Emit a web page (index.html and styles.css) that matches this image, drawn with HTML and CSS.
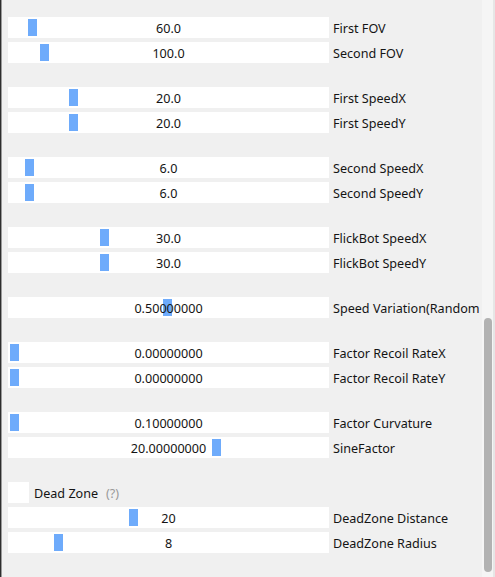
FILE: index.html
```html
<!DOCTYPE html>
<html>
<head>
<meta charset="utf-8">
<link rel="stylesheet" href="styles.css">
</head>
<body>
<div class="window">
  <div class="edge"></div>
  <div class="content">
    <div class="group">
      <div class="row"><div class="slider"><span class="grab" style="left:20px"></span><span class="val">60.0</span></div><span class="label">First FOV</span></div>
      <div class="row"><div class="slider"><span class="grab" style="left:32px"></span><span class="val">100.0</span></div><span class="label">Second FOV</span></div>
    </div>
    <div class="group">
      <div class="row"><div class="slider"><span class="grab" style="left:61px"></span><span class="val">20.0</span></div><span class="label">First SpeedX</span></div>
      <div class="row"><div class="slider"><span class="grab" style="left:61px"></span><span class="val">20.0</span></div><span class="label">First SpeedY</span></div>
    </div>
    <div class="group">
      <div class="row"><div class="slider"><span class="grab" style="left:17px"></span><span class="val">6.0</span></div><span class="label">Second SpeedX</span></div>
      <div class="row"><div class="slider"><span class="grab" style="left:17px"></span><span class="val">6.0</span></div><span class="label">Second SpeedY</span></div>
    </div>
    <div class="group">
      <div class="row"><div class="slider"><span class="grab" style="left:92px"></span><span class="val">30.0</span></div><span class="label">FlickBot SpeedX</span></div>
      <div class="row"><div class="slider"><span class="grab" style="left:92px"></span><span class="val">30.0</span></div><span class="label">FlickBot SpeedY</span></div>
    </div>
    <div class="group">
      <div class="row"><div class="slider"><span class="grab" style="left:155px"></span><span class="val">0.50000000</span></div><span class="label">Speed Variation(Random</span></div>
    </div>
    <div class="group">
      <div class="row"><div class="slider"><span class="grab" style="left:2px"></span><span class="val">0.00000000</span></div><span class="label">Factor Recoil RateX</span></div>
      <div class="row"><div class="slider"><span class="grab" style="left:2px"></span><span class="val">0.00000000</span></div><span class="label">Factor Recoil RateY</span></div>
    </div>
    <div class="group">
      <div class="row"><div class="slider"><span class="grab" style="left:2px"></span><span class="val">0.10000000</span></div><span class="label">Factor Curvature</span></div>
      <div class="row"><div class="slider"><span class="grab" style="left:204px"></span><span class="val">20.00000000</span></div><span class="label">SineFactor</span></div>
    </div>
    <div class="group">
      <div class="row"><span class="check"></span><span class="check-label">Dead Zone</span><span class="help">(?)</span></div>
      <div class="row"><div class="slider"><span class="grab" style="left:121px"></span><span class="val">20</span></div><span class="label">DeadZone Distance</span></div>
      <div class="row"><div class="slider"><span class="grab" style="left:46px"></span><span class="val">8</span></div><span class="label">DeadZone Radius</span></div>
    </div>
  </div>
  <div class="scrollbar"><div class="thumb"></div></div>
  <div class="rim"></div>
</div>
</body>
</html>
```
FILE: styles.css
```css
html, body {
  margin: 0;
  padding: 0;
  background: #f0f0f0;
}
body {
  font-family: "Noto Sans", "Liberation Sans", sans-serif;
  font-size: 12.6px;
  color: #141414;
}
.window {
  display: flex;
  height: 577px;
  width: 495px;
  overflow: hidden;
}
.edge {
  width: 1px;
  background: #2e2e2e;
  border-right: 1px solid #9a9a9a;
  flex: none;
}
.content {
  flex: 1;
  min-width: 0;
  overflow: hidden;
  padding: 17px 0 0 6px;
  display: flex;
  flex-direction: column;
  gap: 24px;
}
.group {
  display: flex;
  flex-direction: column;
  gap: 4px;
}
.row {
  display: flex;
  align-items: center;
  height: 21px;
  white-space: nowrap;
}
.slider {
  position: relative;
  flex: none;
  width: 321px;
  height: 21px;
  background: #ffffff;
}
.grab {
  position: absolute;
  top: 2px;
  width: 9px;
  height: 17px;
  background: #6eabfb;
}
.val {
  position: relative;
  display: block;
  text-align: center;
  line-height: 21px;
  padding-top: 1px;
}
.label {
  margin-left: 4px;
  line-height: 21px;
  padding-top: 1px;
}
.check {
  width: 21px;
  height: 21px;
  background: #ffffff;
  flex: none;
}
.check-label {
  margin-left: 5px;
  padding-top: 1px;
}
.help {
  margin-left: 8px;
  color: #9a9a9a;
  padding-top: 1px;
}
.scrollbar {
  flex: none;
  width: 11px;
  background: #f5f5f5;
  padding: 318px 1px 5px 2px;
  box-sizing: border-box;
  display: flex;
}
.thumb {
  flex: 1;
  background: #b2b2b2;
  border-radius: 4px;
}
.rim {
  flex: none;
  width: 2px;
  background: #e6e6e6;
}
```
